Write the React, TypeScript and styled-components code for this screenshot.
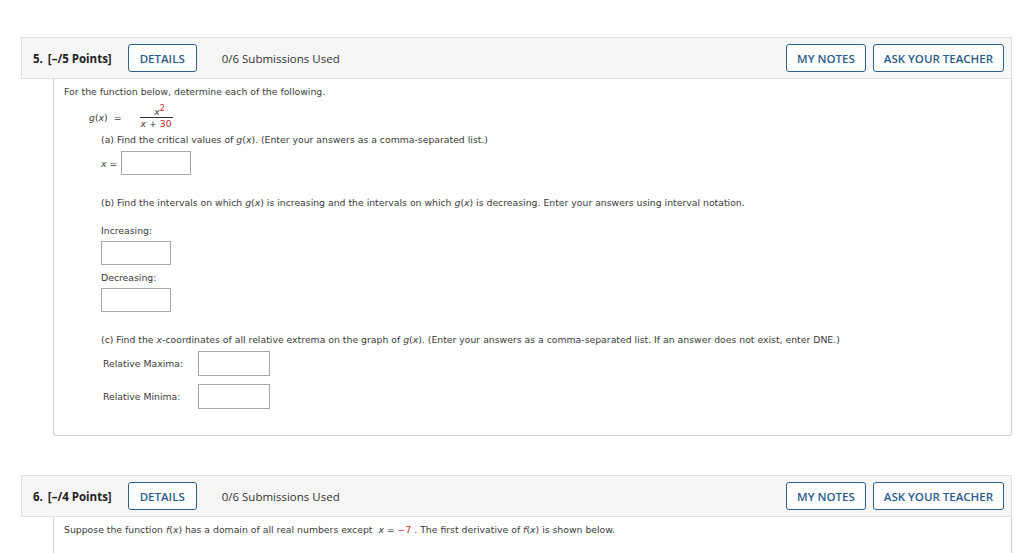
import styled, { createGlobalStyle } from "styled-components";

const Global = createGlobalStyle`
  html, body {
    margin: 0;
    padding: 0;
    background: #fff;
  }
`;

const Page = styled.div`
  display: flex;
  flex-direction: column;
  gap: 39px;
  padding: 37px 12px 0 21px;
`;

const Question = styled.section`
  display: flex;
  flex-direction: column;
  width: 991px;
`;

const Header = styled.div`
  display: flex;
  align-items: center;
  height: 42px;
  padding: 0 7px 0 11px;
  background: #f6f6f6;
  border: 1px solid #e0e0e0;
  box-sizing: border-box;
  font-family: "Open Sans", sans-serif;
`;

const Number = styled.span`
  font-size: 11.5px;
  font-weight: 700;
  color: #222;
  margin-right: 5px;
`;

const Points = styled.span`
  font-size: 11.5px;
  font-weight: 700;
  color: #222;
  margin-right: 16px;
`;

const HeadButton = styled.button<{ $gap?: number }>`
  height: 28px;
  padding: 0 10px;
  margin-left: ${(p) => p.$gap ?? 0}px;
  background: #fff;
  border: 1px solid #2e6190;
  border-radius: 3px;
  font-family: "Open Sans", sans-serif;
  font-size: 11.5px;
  font-weight: 600;
  color: #2a5b8a;
  cursor: pointer;
`;

const DetailsButton = styled(HeadButton)`
  padding: 0 11px;
`;

const Used = styled.span`
  margin-left: 25px;
  font-size: 11.5px;
  color: #333;
`;

const Spacer = styled.div`
  flex: 1;
`;

const Body = styled.div<{ $height?: number }>`
  margin-left: 32px;
  ${(p) => (p.$height ? `height: ${p.$height}px;` : "")}
  border: 1px solid #cfcfcf;
  border-top: none;
  border-radius: 0 0 3px 3px;
  padding: 7px 0 0 10px;
  box-sizing: border-box;
  font-family: Verdana, "DejaVu Sans", sans-serif;
  font-size: 9.3px;
  color: #3a3a3a;
`;

const Line = styled.div<{ $indent?: number; $top?: number }>`
  margin-left: ${(p) => p.$indent ?? 0}px;
  margin-top: ${(p) => p.$top ?? 0}px;
  line-height: 12px;
`;

const Formula = styled.div`
  display: flex;
  align-items: center;
  margin: 8px 0 0 25px;
  gap: 8px;
`;

const Eq = styled.span`
  margin-left: 6px;
`;

const Frac = styled.span`
  display: inline-flex;
  flex-direction: column;
  align-items: center;
  margin-left: 10px;
`;

const Num = styled.span`
  padding: 0 3px 0 10px;
  line-height: 11px;
`;

const Den = styled.span`
  border-top: 1px solid #333;
  padding: 0 1px;
  line-height: 11px;
`;

const Red = styled.span`
  color: #d02a2a;
`;

const Sup = styled.sup`
  font-size: 8px;
  line-height: 0;
`;

const I = styled.i`
  font-style: italic;
`;

const AnswerRow = styled.div<{ $indent: number; $top: number; $label?: number }>`
  display: flex;
  align-items: center;
  margin-left: ${(p) => p.$indent}px;
  margin-top: ${(p) => p.$top}px;
  & > span {
    ${(p) => (p.$label ? `width: ${p.$label}px;` : "margin-right: 4px;")}
  }
`;

const Box = styled.input<{ $w?: number; $h?: number }>`
  width: ${(p) => p.$w ?? 70}px;
  height: ${(p) => p.$h ?? 24}px;
  box-sizing: border-box;
  border: 1px solid #a8a8a8;
  border-radius: 0;
  background: #fff;
  padding: 0;
`;

const Label = styled.div<{ $top: number }>`
  margin: ${(p) => p.$top}px 0 0 37px;
  line-height: 12px;
`;

const StackBox = styled(Box)`
  display: block;
  margin: 4px 0 0 37px;
`;

function QuestionHeader({ n, pts }: { n: number; pts: number }) {
  return (
    <Header>
      <Number>{n}.</Number>
      <Points>[–/{pts} Points]</Points>
      <DetailsButton>DETAILS</DetailsButton>
      <Used>0/6 Submissions Used</Used>
      <Spacer />
      <HeadButton>MY NOTES</HeadButton>
      <HeadButton $gap={7}>ASK YOUR TEACHER</HeadButton>
    </Header>
  );
}

export default function App() {
  return (
    <>
      <Global />
      <Page>
        <Question>
          <QuestionHeader n={5} pts={5} />
          <Body $height={357}>
            <Line>For the function below, determine each of the following.</Line>
            <Formula>
              <span>
                <I>g</I>(<I>x</I>)<Eq>=</Eq>
              </span>
              <Frac>
                <Num>
                  <I>x</I>
                  <Sup>
                    <Red>2</Red>
                  </Sup>
                </Num>
                <Den>
                  <I>x</I> + <Red>30</Red>
                </Den>
              </Frac>
            </Formula>
            <Line $indent={37} $top={5}>
              (a) Find the critical values of <I>g</I>(<I>x</I>). (Enter your answers as a comma-separated list.)
            </Line>
            <AnswerRow $indent={37} $top={5}>
              <span>
                <I>x</I> =
              </span>
              <Box />
            </AnswerRow>
            <Line $indent={37} $top={22}>
              (b) Find the intervals on which <I>g</I>(<I>x</I>) is increasing and the intervals on which{" "}
              <I>g</I>(<I>x</I>) is decreasing. Enter your answers using interval notation.
            </Line>
            <Label $top={16}>Increasing:</Label>
            <StackBox />
            <Label $top={7}>Decreasing:</Label>
            <StackBox />
            <Line $indent={37} $top={22}>
              (c) Find the <I>x</I>-coordinates of all relative extrema on the graph of <I>g</I>(<I>x</I>). (Enter
              your answers as a comma-separated list. If an answer does not exist, enter DNE.)
            </Line>
            <AnswerRow $indent={39} $top={5} $label={95}>
              <span>Relative Maxima:</span>
              <Box $w={72} $h={25} />
            </AnswerRow>
            <AnswerRow $indent={39} $top={8} $label={95}>
              <span>Relative Minima:</span>
              <Box $w={72} $h={25} />
            </AnswerRow>
          </Body>
        </Question>
        <Question>
          <QuestionHeader n={6} pts={4} />
          <Body $height={120}>
            <Line $top={0}>
              Suppose the function <I>f</I>(<I>x</I>) has a domain of all real numbers except&nbsp; <I>x</I> ={" "}
              <Red>−7</Red> . The first derivative of <I>f</I>(<I>x</I>) is shown below.
            </Line>
          </Body>
        </Question>
      </Page>
    </>
  );
}
